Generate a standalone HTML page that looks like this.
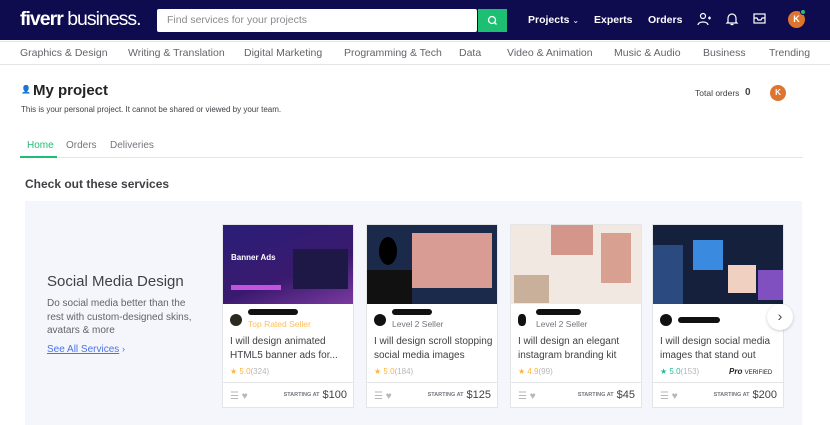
<!DOCTYPE html>
<html><head><meta charset="utf-8"><style>
*{box-sizing:border-box;margin:0;padding:0}
body{width:830px;height:425px;overflow:hidden;background:#fff;font-family:"Liberation Sans",sans-serif;position:relative;color:#404145}
.a{position:absolute}
.hdr{left:0;top:0;width:830px;height:40px;background:#0e0b4f}
.logo{left:20px;top:8px;color:#fff;font-size:19.5px;letter-spacing:-1px}
.logo b{font-weight:bold}
.search{left:157px;top:9px;width:320px;height:23px;background:#fff;border-radius:2px}
.search span{position:absolute;left:10px;top:5px;font-size:10.5px;color:#8a8a8f}
.sbtn{left:478px;top:9px;width:29px;height:23px;background:#1dbf73}
.nav{color:#fff;font-size:10.5px;font-weight:bold;top:14px}
.cats{left:0;top:41px;width:830px;height:24px;border-bottom:1px solid #e4e5e7;border-top:1px solid #e4e5e7}
.cat{top:47px;font-size:10.5px;color:#62646a}
.card{width:132px;height:184px;background:#fff;border:1px solid #e4e5e7;top:224px}
.img{left:0;top:0;width:130px;height:79px}
.av{left:7px;top:89px;width:12px;height:12px;border-radius:50%;background:#111}
.nm{left:25px;top:84px;height:6px;background:#111;border-radius:3px}
.lvl{left:25px;top:94px;font-size:8.5px;color:#74767e}
.t{left:7px;top:110px;font-size:10px;line-height:14px;color:#404145;width:122px}
.r{left:7px;top:142px;font-size:8px;color:#ffb33e}
.r i{color:#b5b6ba;font-style:normal}
.ft{left:0;top:157px;width:130px;height:26px;border-top:1px solid #e4e5e7}
.st{right:6px;top:6px;font-size:11px;color:#404145}
.st small{font-size:5.5px;font-weight:bold;color:#74767e;margin-right:3px;vertical-align:2px}
.ic{left:7px;top:8px;font-size:10px;color:#b5b6ba}
</style></head><body>
<div class="a hdr"></div>
<div class="a logo"><b>fiverr</b> business.</div>
<div class="a search"><span>Find services for your projects</span></div>
<div class="a sbtn"><svg width="29" height="23"><circle cx="14" cy="11" r="3.5" fill="none" stroke="#fff" stroke-width="1.3"/><path d="M16.5 13.5l2 2" stroke="#fff" stroke-width="1.3"/></svg></div>
<div class="a nav" style="left:528px">Projects <span style="font-weight:normal;font-size:8px">⌄</span></div>
<div class="a nav" style="left:594px">Experts</div>
<div class="a nav" style="left:648px">Orders</div>
<svg class="a" style="left:697px;top:12px" width="14" height="14"><circle cx="6" cy="4" r="2.5" fill="none" stroke="#fff" stroke-width="1.2"/><path d="M1 13c0-4 10-4 10 0M11 6h3M12.5 4.5v3" stroke="#fff" fill="none" stroke-width="1.2"/></svg>
<svg class="a" style="left:725px;top:12px" width="14" height="14"><path d="M3 10V6a4 4 0 018 0v4l1 1H2zM5.5 12.5h3" stroke="#fff" fill="none" stroke-width="1.2"/></svg>
<svg class="a" style="left:753px;top:13px" width="14" height="12"><rect x="1" y="1" width="11" height="9" fill="none" stroke="#fff" stroke-width="1.2"/><path d="M1 5h3l1 2h3l1-2h3" stroke="#fff" fill="none" stroke-width="1.2"/></svg>
<div class="a" style="left:788px;top:11px;width:17px;height:17px;border-radius:50%;background:#dd7430;color:#fff;font-size:9px;font-weight:bold;text-align:center;line-height:17px">K</div>
<div class="a" style="left:800px;top:9px;width:6px;height:6px;border-radius:50%;background:#1dbf73;border:1px solid #0e0b4f"></div>
<div class="a cats"></div>
<div class="a cat" style="left:20px">Graphics &amp; Design</div>
<div class="a cat" style="left:128px">Writing &amp; Translation</div>
<div class="a cat" style="left:244px">Digital Marketing</div>
<div class="a cat" style="left:344px">Programming &amp; Tech</div>
<div class="a cat" style="left:459px">Data</div>
<div class="a cat" style="left:507px">Video &amp; Animation</div>
<div class="a cat" style="left:614px">Music &amp; Audio</div>
<div class="a cat" style="left:703px">Business</div>
<div class="a cat" style="left:769px">Trending</div>
<div class="a" style="left:21px;top:85px;font-size:8px;color:#74767e">👤</div>
<div class="a" style="left:33px;top:82px;font-size:15px;font-weight:bold;color:#222325">My project</div>
<div class="a" style="left:21px;top:105px;font-size:8px;color:#404145">This is your personal project. It cannot be shared or viewed by your team.</div>
<div class="a" style="left:695px;top:88px;font-size:8.5px;color:#404145">Total orders</div>
<div class="a" style="left:745px;top:87px;font-size:10px;font-weight:bold;color:#404145">0</div>
<div class="a" style="left:770px;top:85px;width:16px;height:16px;border-radius:50%;background:#dd7430;color:#fff;font-size:8px;font-weight:bold;text-align:center;line-height:16px">K</div>
<div class="a" style="left:27px;top:140px;font-size:10px;color:#1dbf73">Home</div>
<div class="a" style="left:66px;top:140px;font-size:10px;color:#74767e">Orders</div>
<div class="a" style="left:110px;top:140px;font-size:10px;color:#74767e">Deliveries</div>
<div class="a" style="left:20px;top:157px;width:783px;height:1px;background:#e4e5e7"></div>
<div class="a" style="left:20px;top:156px;width:37px;height:2px;background:#1dbf73"></div>
<div class="a" style="left:25px;top:177px;font-size:12px;font-weight:bold;color:#404145">Check out these services</div>
<div class="a" style="left:25px;top:201px;width:777px;height:224px;background:#f5f6fb"></div>
<div class="a" style="left:47px;top:273px;font-size:15px;color:#404145">Social Media Design</div>
<div class="a" style="left:47px;top:297px;font-size:10px;line-height:13.5px;color:#62646a;width:150px">Do social media better than the rest with custom-designed skins, avatars &amp; more</div>
<div class="a" style="left:47px;top:344px;font-size:10px;color:#4a73e8;text-decoration:underline">See All Services</div>
<div class="a" style="left:122px;top:344px;font-size:9px;color:#4a73e8">›</div>

<div class="a card" style="left:222px">
<div class="a img" style="background:linear-gradient(160deg,#2a1e78,#3a1a6e 60%,#7a3aa0)"><div class="a" style="left:8px;top:28px;color:#fff;font-size:8px;font-weight:bold">Banner Ads</div><div class="a" style="left:8px;top:60px;width:50px;height:5px;background:#c452e0"></div><div class="a" style="left:70px;top:24px;width:55px;height:40px;background:#1e1846"></div></div>
<div class="a av" style="background:#2c2a20"></div><div class="a nm" style="width:50px"></div>
<div class="a lvl" style="color:#ffbe5b">Top Rated Seller</div>
<div class="a t">I will design animated HTML5 banner ads for...</div>
<div class="a r">★ 5.0<i>(324)</i></div>
<div class="a ft"><div class="a ic">☰ ♥</div><div class="a st"><small>STARTING AT</small>$100</div></div></div>

<div class="a card" style="left:366px">
<div class="a img" style="background:#1b2a4a"><div class="a" style="left:45px;top:8px;width:80px;height:55px;background:#d89c94"></div><div class="a" style="left:0;top:45px;width:45px;height:34px;background:#111"></div><div class="a" style="left:12px;top:12px;width:18px;height:28px;background:#000;border-radius:50%"></div></div>
<div class="a av"></div><div class="a nm" style="width:40px"></div>
<div class="a lvl">Level 2 Seller</div>
<div class="a t">I will design scroll stopping social media images</div>
<div class="a r">★ 5.0<i>(184)</i></div>
<div class="a ft"><div class="a ic">☰ ♥</div><div class="a st"><small>STARTING AT</small>$125</div></div></div>

<div class="a card" style="left:510px">
<div class="a img" style="background:#f2e8e2"><div class="a" style="left:40px;top:0;width:42px;height:30px;background:#d4958a"></div><div class="a" style="left:90px;top:8px;width:30px;height:50px;background:#d8a090"></div><div class="a" style="left:3px;top:50px;width:35px;height:28px;background:#c8b09a"></div></div>
<div class="a av" style="width:8px;border-radius:40%"></div><div class="a nm" style="width:45px"></div>
<div class="a lvl">Level 2 Seller</div>
<div class="a t">I will design an elegant instagram branding kit</div>
<div class="a r">★ 4.9<i>(99)</i></div>
<div class="a ft"><div class="a ic">☰ ♥</div><div class="a st"><small>STARTING AT</small>$45</div></div></div>

<div class="a card" style="left:652px">
<div class="a img" style="background:#14203c"><div class="a" style="left:0;top:20px;width:30px;height:59px;background:#2a4a80"></div><div class="a" style="left:40px;top:15px;width:30px;height:30px;background:#3a8ae0"></div><div class="a" style="left:75px;top:40px;width:28px;height:28px;background:#f0d0c0"></div><div class="a" style="left:105px;top:45px;width:25px;height:30px;background:#8050c0"></div></div>
<div class="a av"></div><div class="a nm" style="width:42px;top:92px"></div>
<div class="a t">I will design social media images that stand out</div>
<div class="a r" style="color:#1dbf9a">★ 5.0<i>(153)</i></div>
<div class="a" style="left:76px;top:142px;font-size:8px;color:#222"><b><i>Pro</i></b> <span style="font-size:6px">VERIFIED</span></div>
<div class="a ft"><div class="a ic">☰ ♥</div><div class="a st"><small>STARTING AT</small>$200</div></div></div>

<div class="a" style="left:767px;top:304px;width:26px;height:26px;border-radius:50%;background:#fff;box-shadow:0 1px 3px rgba(0,0,0,.2);text-align:center;line-height:24px;font-size:14px;color:#404145">›</div>
</body></html>
